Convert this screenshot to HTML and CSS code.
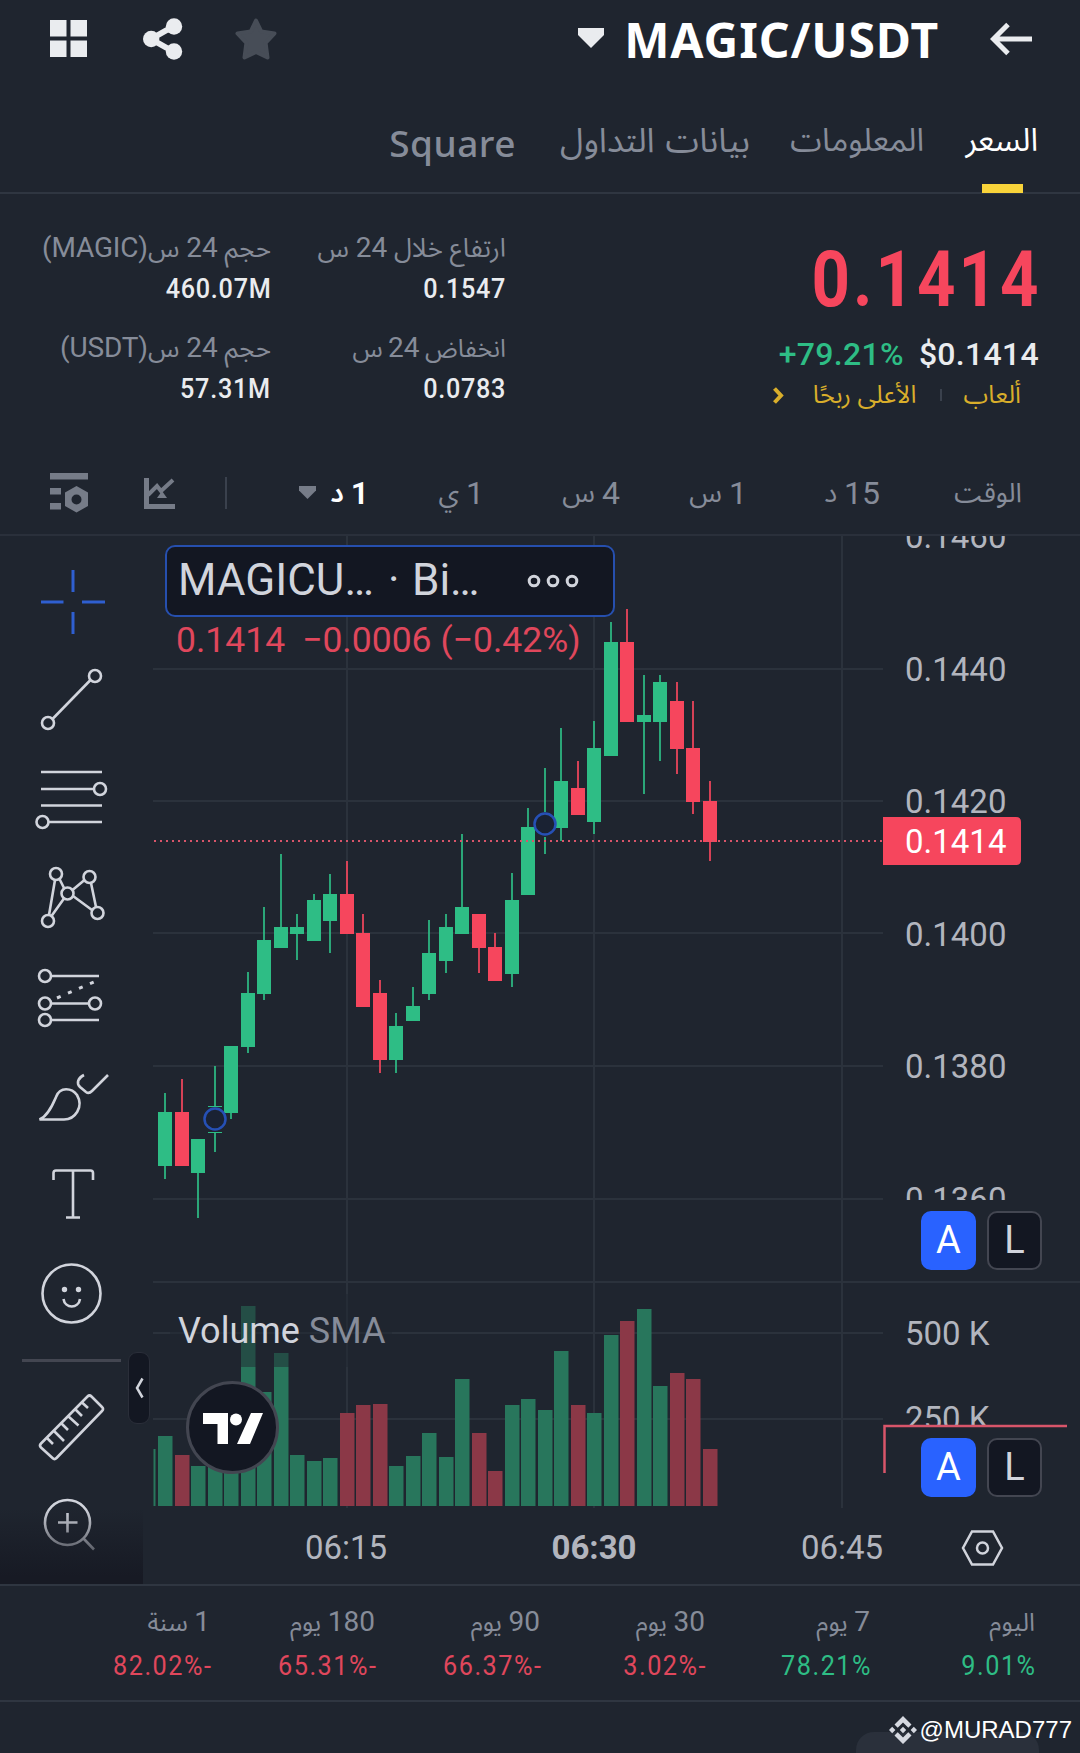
FILE: index.html
```html
<!DOCTYPE html>
<html lang="ar" dir="rtl">
<head>
    <meta charset="UTF-8">
    <meta name="viewport" content="width=device-width, initial-scale=1.0">
    <title>MAGIC/USDT</title>
    <link rel="stylesheet" href="styles.css">
</head>
<body>
    <header class="header">
        <svg width="42" height="34" viewBox="0 0 42 34" fill="none" stroke="#eaecef" stroke-width="5"><path d="M42 17H5M18 2.500L3.500 17L18 31.500"/></svg>
        <div class="pair" dir="ltr">MAGIC/USDT</div>
        <svg class="pair-caret" width="26" height="20" viewBox="0 0 26 20" fill="#eaecef"><path d="M0 0H26V7L13 20L0 7Z"/></svg>
        <svg width="42" height="42" viewBox="0 0 42 42" fill="#474d57" stroke="#474d57" stroke-width="4" stroke-linejoin="round"><path d="M21 2.500L26.300 13.600L39.500 15.500L30.600 25L32.500 39.500L21 34L9.500 39.500L11.400 25L2.500 15.500L15.700 13.600Z"/></svg>
        <svg width="40" height="42" viewBox="0 0 40 42" fill="#eaecef"><path d="M31 8L8 21L31 34" fill="none" stroke="#eaecef" stroke-width="6"/><circle cx="31" cy="8.500" r="8.200"/><circle cx="8.200" cy="21" r="8.200"/><circle cx="31" cy="33.500" r="8.200"/></svg>
        <svg width="37" height="37" viewBox="0 0 37 37" fill="#eaecef"><path d="M0 0H16.500V16.500H0ZM20.500 0H37V16.500H20.500ZM0 20.500H16.500V37H0ZM20.500 20.500H37V37H20.500Z"/></svg>
    </header>

    <nav class="tabs">
        <a class="tab active">السعر</a>
        <a class="tab">المعلومات</a>
        <a class="tab wide">بيانات التداول</a>
        <a class="tab latin">Square</a>
    </nav>

    <section class="ticker">
        <div class="price-box">
            <div class="price"><span class="num">0.1414</span></div>
            <div class="change" dir="ltr"><span class="up">+79.21%</span><span>$0.1414</span></div>
            <div class="tags">
                <span>ألعاب</span>
                <i class="tag-sep"></i>
                <span>الأعلى ربحًا</span>
                <svg width="11" height="17" viewBox="0 0 11 17" fill="none" stroke="#d9ae2b" stroke-width="4"><path d="M1.500 1.500L8 8.500L1.500 15.500"/></svg>
            </div>
        </div>
        <div class="stats">
            <div class="stat"><span class="label">ارتفاع خلال <b>24</b> س</span><span class="value">0.1547</span></div>
            <div class="stat"><span class="label">حجم <b>24</b> س<b dir="ltr">(MAGIC)</b></span><span class="value">460.07M</span></div>
            <div class="stat"><span class="label tight">انخفاض <b>24</b> س</span><span class="value">0.0783</span></div>
            <div class="stat"><span class="label">حجم <b>24</b> س<b dir="ltr">(USDT)</b></span><span class="value">57.31M</span></div>
        </div>
    </section>

    <nav class="frames">
        <span>الوقت</span>
        <span><b>15</b> د</span>
        <span><b>1</b> س</span>
        <span><b>4</b> س</span>
        <span><b>1</b> ي</span>
        <span class="active"><b>1</b> د</span>
        <svg class="frame-caret" width="17" height="13" viewBox="0 0 17 13" fill="#767c88"><path d="M0 0H17V4.500L8.500 13L0 4.500Z"/></svg>
        <i class="frame-sep"></i>
        <svg width="31" height="31" viewBox="0 0 31 31" fill="none" stroke="#767c88" stroke-width="5"><path d="M2.500 0V28.500H31"/><path d="M4 17L13 8L17 13L29 2" stroke-width="4"/><path d="M18 13L23 20H13Z" fill="#767c88" stroke="none"/></svg>
        <svg width="38" height="40" viewBox="0 0 38 40" fill="#767c88"><path d="M0 0H38V6.500H0ZM0 15H11V21.500H0ZM0 30H11V36.500H0Z"/><path fill-rule="evenodd" d="M26.500 13L38 19.500V33L26.500 39.500L15 33V19.500ZM26.500 21.500A5 5 0 1 0 26.500 31.500A5 5 0 1 0 26.500 21.500Z"/></svg>
    </nav>

    <main class="chart-area" dir="ltr">
        <aside class="tools">
            <svg class="tool cross" viewBox="0 0 143 99"><path d="M41 50H63.500M82 50H105M73 18V40M73 60V82"/></svg>
            <svg class="tool" viewBox="0 0 143 99"><path d="M52.500 68L90.500 29"/><circle cx="95" cy="25" r="6"/><circle cx="48" cy="72" r="6"/></svg>
            <svg class="tool" viewBox="0 0 143 99"><path d="M41 22H102M41 39H94M41 55.500H102M49 72H102"/><circle cx="100" cy="39" r="6"/><circle cx="42.500" cy="72" r="6"/></svg>
            <svg class="tool" viewBox="0 0 143 99"><path d="M49 66L55 31M59.500 30L64 39M64 49.500L51.500 67M72.500 41L84.500 31M91 34L96 58M73 47L92 61"/><circle cx="56" cy="25" r="6"/><circle cx="89.500" cy="28" r="6"/><circle cx="67.500" cy="44.500" r="6"/><circle cx="97.500" cy="64" r="6"/><circle cx="48" cy="72" r="6"/></svg>
            <svg class="tool" viewBox="0 0 143 99"><path d="M51 28H99M51 55.500H89M51 72H99"/><path d="M57 50L96 33" stroke-width="3" stroke-dasharray="4 8"/><circle cx="45" cy="28" r="6"/><circle cx="45" cy="55.500" r="6"/><circle cx="95" cy="55.500" r="6"/><circle cx="45" cy="72" r="6"/></svg>
            <svg class="tool" viewBox="0 0 143 99"><path d="M39.500 72.500C48 69 53 57 56 50C60 39 72 41 77 48C84 60 75 72.500 64 72.500Z"/><path d="M84 28C78 31 76 36 80 40L86 45C88 46.500 90 46 92 44L108 28"/></svg>
            <svg class="tool" viewBox="0 0 143 99"><path d="M53.500 34V27Q53.500 24.500 56 24.500H90.500Q93 24.500 93 27V34M73 24.500V71.500M66 71.500H80"/></svg>
            <svg class="tool" viewBox="0 0 143 99"><circle cx="71.500" cy="48.500" r="29"/><path d="M63.500 54C65 64 78.500 64 80 54"/><path class="solid" d="M61.800 44.500a2.700 2.700 0 1 0 5.400 0a2.700 2.700 0 1 0-5.400 0M75.800 44.500a2.700 2.700 0 1 0 5.400 0a2.700 2.700 0 1 0-5.400 0"/></svg>
            <hr class="tool-sep">
            <svg class="tool" viewBox="0 0 143 99"><path d="M87.500 19.500Q89.500 17.500 91.500 19.500L102 30Q104 32 102 34L56.500 81Q54.500 83 52.500 81L41 70.500Q39 68.500 41 66.500Z"/><path d="M47 61L53 67M54 54L64 64M61.500 46.500L68 53M68.500 39.500L78.500 48.500M75.500 32.500L82 39M82 25.500L88 31"/></svg>
            <svg class="tool" viewBox="0 0 143 99"><circle cx="67.500" cy="46.500" r="22.500"/><path d="M58 46.500H77.500M67.500 37V56.500M83.500 62.500L94 73.500"/></svg>
        </aside>
        <svg id="chart" class="chart" viewBox="143 536 937 1048"></svg>

        <div class="symbol-box">
            <span class="symbol">MAGICU…</span>
            <span class="dot">·</span>
            <span class="exchange">Bi…</span>
            <svg width="52" height="14" viewBox="0 0 52 14" fill="none" stroke="#d1d4dc" stroke-width="3"><circle cx="7" cy="7" r="4.800"/><circle cx="26" cy="7" r="4.800"/><circle cx="45" cy="7" r="4.800"/></svg>
        </div>
        <div class="ohlc"><span>0.1414</span><span>−0.0006</span><span>(−0.42%)</span></div>
        <div class="volume-legend">Volume <span>SMA</span></div>
        <div class="collapse"><svg width="9" height="22" viewBox="0 0 9 22" fill="none" stroke="#d1d4dc" stroke-width="2.500"><path d="M7.500 1.500L2 11L7.500 20.500"/></svg></div>
        <div class="tv-logo"><svg width="60" height="32" viewBox="0 0 60 32" fill="#fff"><path d="M0 0H25V31H14.500V11H0ZM48 0H60L47 31H34Z"/><circle cx="33" cy="6.500" r="6"/></svg></div>
        <div class="scale-btns top"><span class="on">A</span><span>L</span></div>
        <div class="scale-btns bottom"><span class="on">A</span><span>L</span></div>
    </main>

    <section class="periods">
        <div><span class="label">اليوم</span><span class="value up" dir="ltr">9.01%</span></div>
        <div><span class="label"><b>7</b> يوم</span><span class="value up" dir="ltr">78.21%</span></div>
        <div><span class="label"><b>30</b> يوم</span><span class="value down" dir="ltr">3.02%-</span></div>
        <div><span class="label"><b>90</b> يوم</span><span class="value down" dir="ltr">66.37%-</span></div>
        <div><span class="label"><b>180</b> يوم</span><span class="value down" dir="ltr">65.31%-</span></div>
        <div><span class="label"><b>1</b> سنة</span><span class="value down" dir="ltr">82.02%-</span></div>
    </section>

    <footer class="footer">
        <div class="sheet-btn"></div>
        <div class="author" dir="ltr">
            <svg width="28" height="28" viewBox="0 0 28 28" fill="#d5d8e0"><path d="M14 0L22.500 8.500L19.300 11.700L14 6.400L8.700 11.700L5.500 8.500ZM14 28L5.500 19.500L8.700 16.300L14 21.600L19.300 16.300L22.500 19.500ZM14 10.800L17.200 14L14 17.200L10.800 14ZM3.200 10.800L6.400 14L3.200 17.200L0 14ZM24.800 10.800L28 14L24.800 17.200L21.600 14Z"/></svg>
            <span>@MURAD777</span>
        </div>
    </footer>

    <script src="chart.js"></script>
</body>
</html>
```
FILE: styles.css
```css
:root {
    --bg: #1f252f;
    --text: #eaecef;
    --muted: #868c99;
    --line: #2f3641;
    --green: #2ebd85;
    --red: #f6465d;
    --yellow: #f8d33a;
    --dark: #131722;
}

* {
    box-sizing: border-box;
    margin: 0;
    padding: 0;
}

body {
    width: 1080px;
    height: 1753px;
    overflow: hidden;
    background-color: var(--bg);
    color: var(--text);
    font-family: "Noto Sans", "Noto Sans Arabic", "DejaVu Sans", sans-serif;
}

svg {
    display: block;
}

b {
    font-weight: inherit;
    font-family: Roboto, sans-serif;
}

.up {
    color: var(--green);
}

.down {
    color: #e0475c;
}

/* header */
.header {
    display: grid;
    grid-template-columns: 94px 334px 327px 94px 96px 37px;
    align-items: center;
    height: 77px;
    padding-right: 48px;
}

.pair {
    justify-self: start;
    height: 77px;
    font-size: 48px;
    font-weight: 700;
    line-height: 80px;
    letter-spacing: 0.9px;
    white-space: nowrap;
    color: #fff;
    margin-right: -1px;
}

.pair-caret {
    margin-bottom: 1px;
}

.tabs {
    display: grid;
    grid-template-columns: 114px 174px 234px 123px;
    height: 117px;
    padding-right: 42px;
    border-bottom: 2px solid var(--line);
}

.tab {
    position: relative;
    justify-self: start;
    height: 116px;
    font-size: 32px;
    line-height: 124px;
    white-space: nowrap;
    color: var(--muted);
}

.tab.wide {
    font-size: 34px;
    word-spacing: 2px;
}

.tab.latin {
    font-size: 37px;
    font-weight: 500;
    line-height: 131px;
    letter-spacing: 0.5px;
}

.tab.active {
    color: #fff;
}

.tab.active::after {
    content: "";
    position: absolute;
    right: 15px;
    bottom: 0;
    width: 41px;
    height: 9px;
    background-color: var(--yellow);
}

/* price and 24h stats */
.ticker {
    display: flex;
    height: 256px;
    padding: 42px 42px 0 0;
}

.price-box {
    width: 532px;
}

.price {
    height: 88px;
    font-family: Roboto, sans-serif;
    font-size: 78px;
    font-weight: 700;
    line-height: 88px;
    color: var(--red);
}

.num {
    display: inline-block;
    letter-spacing: 3.5px;
    margin-right: -3px;
    transform: scaleX(0.86);
    transform-origin: right;
}

.change {
    display: flex;
    justify-content: flex-end;
    gap: 15px;
    margin: 10px -1px 0 0;
    font-family: Roboto, sans-serif;
    font-size: 32px;
    font-weight: 500;
    line-height: 40px;
    letter-spacing: 0.3px;
}

.tags {
    display: flex;
    align-items: center;
    height: 42px;
    padding-right: 17px;
    font-size: 25px;
    color: #d9ae2b;
}

.tag-sep {
    width: 2px;
    height: 12px;
    margin: 0 21px 0 24px;
    background-color: #3a414d;
}

.tags svg {
    margin-right: 29px;
}

.stats {
    display: grid;
    grid-template-columns: 235px 228px;
    grid-auto-rows: 100px;
    margin-top: -9px;
}

.stat {
    display: flex;
    flex-direction: column;
    align-items: flex-start;
}

.stat span {
    height: 41px;
    font-size: 28px;
    line-height: 41px;
    white-space: nowrap;
}

.stat .label {
    font-size: 26px;
    color: var(--muted);
}

.stat .label.tight {
    font-size: 25px;
    word-spacing: -1px;
}

.stat .label b {
    font-size: 28px;
    letter-spacing: -0.2px;
}

.stat .value,
.periods .value {
    font-family: Roboto, sans-serif;
    font-weight: 500;
    letter-spacing: 0.8px;
    transform: scaleX(0.9);
    transform-origin: right;
}

/* time frames */
.frames {
    display: grid;
    grid-template-columns: 142px 133px 127px 136px 115px 51px 89px 52px 87px 38px;
    align-items: center;
    height: 86px;
    padding: 2px 60px 0 0;
    border-bottom: 2px solid #2a303b;
    font-size: 27px;
    color: var(--muted);
}

.frames span {
    white-space: nowrap;
    margin-right: -2px;
}

.frames b {
    font-size: 32px;
    vertical-align: -2px;
}

.frames .active {
    font-weight: 600;
    color: #fff;
}

.frame-caret {
    margin-bottom: 2px;
}

.frame-sep {
    width: 2px;
    height: 32px;
    background-color: #3a414d;
}

/* chart */
.chart-area {
    position: relative;
    display: grid;
    grid-template-columns: 143px 937px;
    height: 1048px;
    font-family: Roboto, sans-serif;
}

.tools {
    position: relative;
    height: 1048px;
    padding-top: 16px;
}

.tools::after {
    content: "";
    position: absolute;
    left: 0;
    bottom: 0;
    width: 143px;
    height: 76px;
    background: linear-gradient(rgba(23, 26, 36, 0), #171a24 90%);
}

.tool {
    width: 143px;
    height: 99px;
    fill: none;
    stroke: #d1d4dc;
    stroke-width: 2.6;
}

.tool.cross {
    stroke: #2f5fd0;
    stroke-width: 3;
}

.tool .solid {
    fill: #d1d4dc;
    stroke: none;
}

.tool-sep {
    width: 99px;
    height: 3px;
    margin: 15px 22px;
    border: none;
    background-color: #434651;
}

.chart {
    width: 937px;
    height: 1048px;
}

.grid {
    stroke: #2b323c;
    stroke-width: 2;
}

.axis {
    font-size: 33px;
    fill: #b2b5be;
}

.symbol-box {
    position: absolute;
    left: 165px;
    top: 9px;
    display: flex;
    align-items: center;
    width: 450px;
    height: 72px;
    padding-left: 11px;
    border: 2px solid #264fae;
    border-radius: 10px;
    background-color: var(--dark);
    font-size: 44px;
    line-height: 64px;
    color: #d1d4dc;
}

.symbol-box span {
    margin-top: -2px;
}

.symbol {
    width: 210px;
}

.dot {
    width: 24px;
}

.exchange {
    width: 115px;
}

.ohlc {
    position: absolute;
    left: 176px;
    top: 82px;
    display: flex;
    gap: 17px;
    font-size: 35.5px;
    line-height: 44px;
    color: #e0475c;
}

.ohlc span + span + span {
    margin-left: -8px;
}

.volume-legend {
    position: absolute;
    left: 170px;
    top: 758px;
    width: 222px;
    height: 73px;
    padding-left: 8px;
    background-color: rgba(31, 37, 47, 0.5);
    font-size: 36px;
    line-height: 74px;
    color: #d1d4dc;
}

.volume-legend span {
    color: var(--muted);
}

.collapse {
    position: absolute;
    left: 128px;
    top: 816px;
    display: flex;
    align-items: center;
    justify-content: center;
    width: 22px;
    height: 72px;
    border: 1px solid #2a2e39;
    border-radius: 9px;
    background-color: var(--dark);
}

.tv-logo {
    position: absolute;
    left: 186px;
    top: 845px;
    display: flex;
    align-items: center;
    justify-content: center;
    width: 93px;
    height: 93px;
    padding-top: 3px;
    border: 3px solid #434651;
    border-radius: 50%;
    background-color: var(--dark);
}

.scale-btns {
    position: absolute;
    left: 921px;
    display: flex;
    gap: 11px;
}

.scale-btns.top {
    top: 675px;
}

.scale-btns.bottom {
    top: 902px;
}

.scale-btns span {
    width: 55px;
    height: 59px;
    border: 2px solid #434651;
    border-radius: 10px;
    background-color: var(--dark);
    font-size: 38px;
    line-height: 54px;
    text-align: center;
    color: #d1d4dc;
}

.scale-btns .on {
    border-color: #2962ff;
    background-color: #2962ff;
    color: #fff;
}

/* performance */
.periods {
    display: grid;
    grid-template-columns: repeat(6, 165px);
    height: 118px;
    padding: 14px 45px 0 0;
    border-top: 2px solid var(--line);
    border-bottom: 2px solid var(--line);
}

.periods div {
    display: flex;
    flex-direction: column;
    align-items: flex-start;
}

.periods span {
    height: 44px;
    font-size: 28px;
    line-height: 44px;
    white-space: nowrap;
}

.periods .label {
    font-size: 25px;
    line-height: 42px;
    color: var(--muted);
}

.periods .label b {
    font-size: 28px;
}

.periods .value {
    font-weight: 400;
    letter-spacing: 1.7px;
    margin-right: -2px;
}

.footer {
    position: relative;
    height: 51px;
    padding: 30px 41px 0 0;
    overflow: hidden;
}

.sheet-btn {
    width: 183px;
    height: 60px;
    border-radius: 18px;
    background-color: #2a303b;
}

.author {
    position: absolute;
    right: 8px;
    top: 13px;
    display: flex;
    align-items: center;
    gap: 3px;
    font-family: "Liberation Sans", Arial, sans-serif;
    font-size: 24px;
    line-height: 30px;
    color: #fff;
}
```
FILE: chart.js
```js
const chart = document.getElementById('chart');

const GREEN = '#2ebd85';
const RED = '#f6465d';
const FIRST_X = 165;
const STEP = 16.5;
const BASE = 1506;

// direction, body top, body bottom, wick top, wick bottom, volume top
const candles = [
    ['g', 1112, 1166, 1093, 1179, 1436],
    ['r', 1112, 1166, 1079, 1166, 1455],
    ['g', 1139, 1173, 1139, 1218, 1466],
    ['g', 1106, 1133, 1066, 1152, 1460],
    ['g', 1046, 1113, 1046, 1119, 1440],
    ['g', 993, 1047, 972, 1053, 1306],
    ['g', 940, 994, 907, 1000, 1392],
    ['g', 927, 948, 854, 948, 1353],
    ['g', 927, 934, 914, 960, 1455],
    ['g', 900, 941, 894, 941, 1461],
    ['g', 894, 921, 874, 953, 1458],
    ['r', 894, 934, 861, 934, 1413],
    ['r', 933, 1007, 914, 1007, 1405],
    ['r', 993, 1060, 980, 1073, 1404],
    ['g', 1026, 1060, 1013, 1073, 1466],
    ['g', 1006, 1021, 987, 1021, 1456],
    ['g', 953, 994, 920, 1000, 1433],
    ['g', 927, 961, 914, 973, 1457],
    ['g', 907, 934, 834, 934, 1379],
    ['r', 914, 948, 914, 973, 1433],
    ['r', 947, 981, 933, 981, 1471],
    ['g', 900, 974, 873, 987, 1405],
    ['g', 827, 895, 808, 895, 1399],
    ['g', 814, 834, 768, 854, 1410],
    ['g', 781, 828, 728, 841, 1351],
    ['r', 788, 815, 761, 815, 1405],
    ['g', 748, 822, 721, 834, 1413],
    ['g', 642, 756, 622, 756, 1335],
    ['r', 642, 722, 609, 722, 1321],
    ['g', 715, 722, 675, 794, 1309],
    ['g', 682, 722, 675, 761, 1386],
    ['r', 701, 749, 682, 774, 1373],
    ['r', 748, 802, 701, 814, 1379],
    ['r', 801, 842, 781, 861, 1449]
];

let out = '';

function line(x1, y1, x2, y2, extra) {
    out += `<line x1="${x1}" y1="${y1}" x2="${x2}" y2="${y2}" ${extra}/>`;
}

function rect(x, y, w, h, fill, extra = '') {
    out += `<rect x="${x}" y="${y}" width="${w}" height="${h}" fill="${fill}" ${extra}/>`;
}

function text(x, y, value, extra = 'class="axis"') {
    out += `<text x="${x}" y="${y}" ${extra}>${value}</text>`;
}

// grid
[669, 801, 933, 1066, 1199, 1333, 1419].forEach(y => line(153, y, 883, y, 'class="grid"'));
[347, 594, 842].forEach(x => line(x, 536, x, 1508, 'class="grid"'));
line(153, 1282, 1080, 1282, 'class="grid"');

// volume
rect(153.500, 1449, 2, BASE - 1449, '#28765c');
candles.forEach((c, i) => {
    const x = Math.round(FIRST_X + i * STEP) - 7;
    rect(x, c[5], 14.500, BASE - c[5], c[0] === 'g' ? '#28765c' : '#8b3847');
});

// candles
candles.forEach((c, i) => {
    const x = Math.round(FIRST_X + i * STEP);
    const color = c[0] === 'g' ? GREEN : RED;
    rect(x - 1, c[3], 2, c[4] - c[3], color, 'opacity="0.85"');
    rect(x - 7, c[1], 14, c[2] - c[1], color);
});

// markers
[[215, 1119], [545, 824]].forEach(([x, y]) => {
    rect(x - 8, y - 12, 16, 25, '#1f252f');
    out += `<circle cx="${x}" cy="${y}" r="10.500" fill="#1a2233" stroke="#2650b5" stroke-width="2.500"/>`;
});

// last price
line(154, 841, 883, 841, 'stroke="#d8556a" stroke-width="2" stroke-dasharray="2 4"');

// price axis
out += '<clipPath id="priceClip"><rect x="883" y="536" width="197" height="664"/></clipPath>';
out += '<clipPath id="volClip"><rect x="883" y="1283" width="197" height="142"/></clipPath>';
out += '<g clip-path="url(#priceClip)">';
[['0.1460', 548], ['0.1440', 681], ['0.1420', 813], ['0.1400', 946], ['0.1380', 1078], ['0.1360', 1211]]
    .forEach(([v, y]) => text(905, y, v));
out += '</g><g clip-path="url(#volClip)">';
text(905, 1345, '500 K');
text(905, 1430, '250 K');
out += '</g>';
out += '<path d="M883 817H1016Q1021 817 1021 822V860Q1021 865 1016 865H883Z" fill="#f6465d"/>';
text(905, 853, '0.1414', 'class="axis" style="fill:#fff"');
out += '<path d="M884.500 1473V1426H1067" fill="none" stroke="#d8556a" stroke-width="2.500"/>';

// time axis
text(346, 1559, '06:15', 'class="axis" text-anchor="middle"');
text(594, 1559, '06:30', 'class="axis" text-anchor="middle" font-weight="700"');
text(842, 1559, '06:45', 'class="axis" text-anchor="middle"');
out += '<g fill="none" stroke="#d1d4dc" stroke-width="2.500"><path d="M972 1531.500H993L1002 1548L993 1564.500H972L963 1548Z"/><circle cx="982.500" cy="1548" r="5.500"/></g>';

chart.innerHTML = out;
```
